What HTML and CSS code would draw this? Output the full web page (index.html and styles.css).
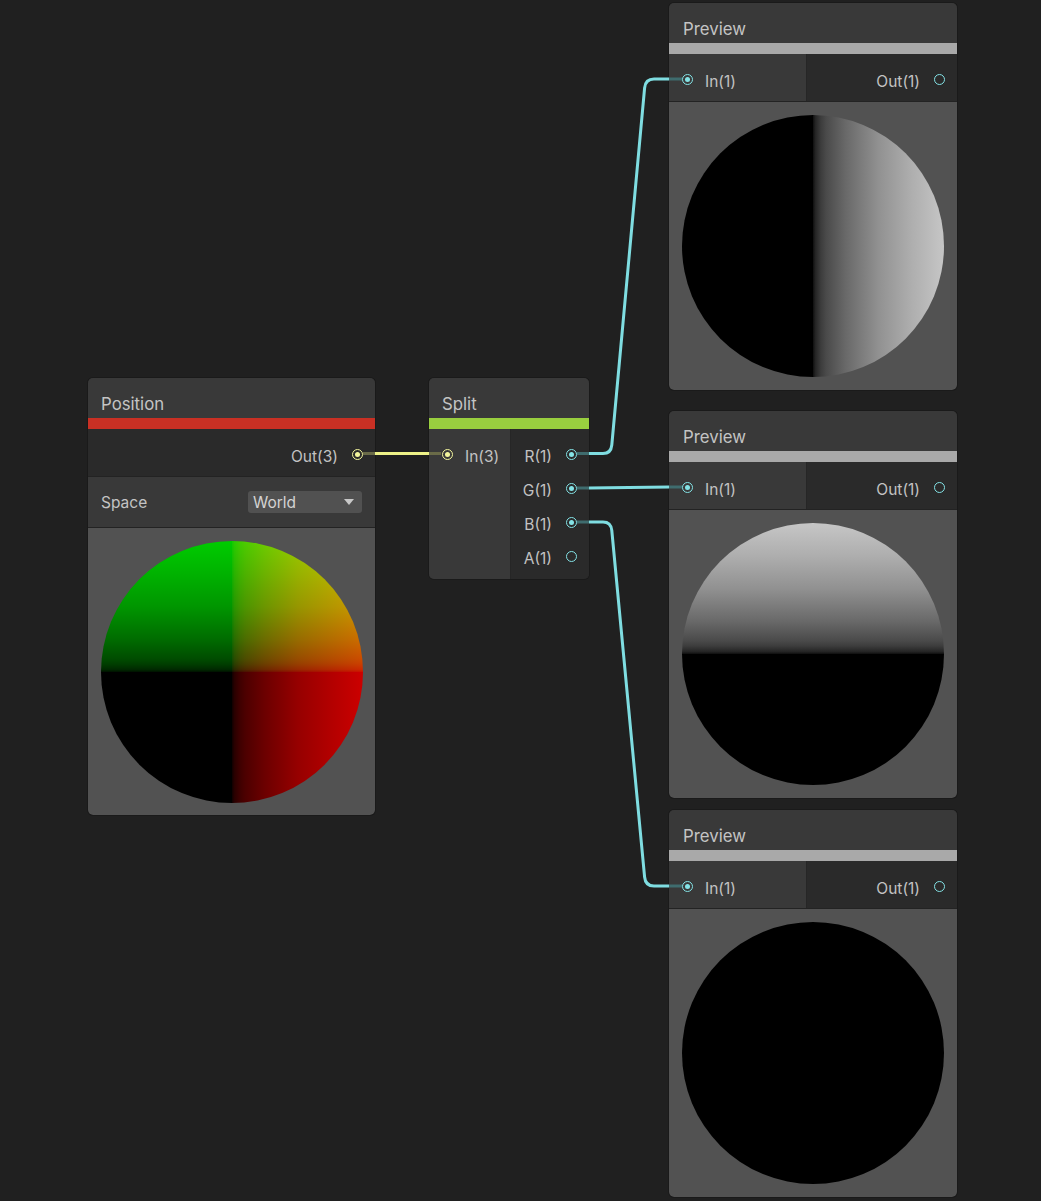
FILE: index.html
```html
<!DOCTYPE html>
<html>
<head>
<meta charset="utf-8">
<link rel="stylesheet" href="styles.css">
</head>
<body>
<div class="canvas">

  <div class="node node-position">
    <div class="title">Position</div>
    <div class="bar bar-red"></div>
    <div class="ports single">
      <div class="col col-out full">
        <div class="row out"><span class="label">Out(3)</span><span class="port yellow on"></span></div>
      </div>
    </div>
    <div class="sep"></div>
    <div class="field">
      <span class="field-label">Space</span>
      <div class="dropdown"><span>World</span><span class="arrow"></span></div>
    </div>
    <div class="sep"></div>
    <div class="preview p287"><div class="sphere sphere-pos"></div></div>
  </div>

  <div class="node node-split">
    <div class="title">Split</div>
    <div class="bar bar-green"></div>
    <div class="ports split-body">
      <div class="col col-in split-in">
        <div class="row in"><span class="port yellow on"></span><span class="label">In(3)</span></div>
      </div>
      <div class="col col-out split-out">
        <div class="row out"><span class="label">R(1)</span><span class="port cyan on"></span></div>
        <div class="row out"><span class="label">G(1)</span><span class="port cyan on"></span></div>
        <div class="row out"><span class="label">B(1)</span><span class="port cyan on"></span></div>
        <div class="row out"><span class="label">A(1)</span><span class="port cyan"></span></div>
      </div>
    </div>
  </div>

  <div class="node node-preview pv1">
    <div class="title">Preview</div>
    <div class="bar bar-gray"></div>
    <div class="ports pv-ports">
      <div class="col col-in pv-in"><div class="row in"><span class="port cyan on"></span><span class="label">In(1)</span></div></div>
      <div class="col col-out pv-out"><div class="row out"><span class="label">Out(1)</span><span class="port cyan"></span></div></div>
    </div>
    <div class="sep"></div>
    <div class="preview p288"><div class="sphere sphere-r"></div></div>
  </div>

  <div class="node node-preview pv2">
    <div class="title">Preview</div>
    <div class="bar bar-gray"></div>
    <div class="ports pv-ports">
      <div class="col col-in pv-in"><div class="row in"><span class="port cyan on"></span><span class="label">In(1)</span></div></div>
      <div class="col col-out pv-out"><div class="row out"><span class="label">Out(1)</span><span class="port cyan"></span></div></div>
    </div>
    <div class="sep"></div>
    <div class="preview p288"><div class="sphere sphere-g"></div></div>
  </div>

  <div class="node node-preview pv3">
    <div class="title">Preview</div>
    <div class="bar bar-gray"></div>
    <div class="ports pv-ports">
      <div class="col col-in pv-in"><div class="row in"><span class="port cyan on"></span><span class="label">In(1)</span></div></div>
      <div class="col col-out pv-out"><div class="row out"><span class="label">Out(1)</span><span class="port cyan"></span></div></div>
    </div>
    <div class="sep"></div>
    <div class="preview p288"><div class="sphere sphere-b"></div></div>
  </div>

  <svg class="edges" width="1041" height="1201" viewBox="0 0 1041 1201">
    <!-- Position Out -> Split In -->
    <path class="dim-y" d="M363 453.5 L375 453.5"/>
    <path class="edge-y" d="M375 453.5 L429 453.5"/>
    <path class="dim-y" d="M429 453.5 L441 453.5"/>
    <!-- R -> Preview 1 -->
    <path class="dim-c" d="M577 453.5 L589 453.5"/>
    <path class="edge-c" d="M589 453.5 L603 453.5 Q611 453.5 611.8 445 L644.6 88 Q645.4 79 654 79 L669 79"/>
    <path class="dim-c" d="M669 79 L682 79"/>
    <!-- G -> Preview 2 -->
    <path class="dim-c" d="M577 488 L589 488"/>
    <path class="edge-c" d="M589 488 L669 487"/>
    <path class="dim-c" d="M669 487 L682 487"/>
    <!-- B -> Preview 3 -->
    <path class="dim-c" d="M577 522 L589 522"/>
    <path class="edge-c" d="M589 522 L603 522 Q611 522 611.8 530.5 L644.6 877 Q645.4 886 654 886 L669 886"/>
    <path class="dim-c" d="M669 886 L682 886"/>
  </svg>

</div>
</body>
</html>
```

FILE: styles.css
```css
* { box-sizing: border-box; }

html, body {
  margin: 0;
  padding: 0;
  background: #202020;
}

body {
  font-family: Inter, "Noto Sans", "Liberation Sans", sans-serif;
  color: #c2c2c2;
}

.canvas {
  position: relative;
  width: 1041px;
  height: 1201px;
  overflow: hidden;
  background: #202020;
}

/* ---------- nodes ---------- */
.node {
  position: absolute;
  display: flex;
  flex-direction: column;
  background: #2a2a2a;
  border-radius: 5px;
  overflow: hidden;
  box-shadow: 0 0 0 1px #1a1a1a;
}

.node-position { left: 88px; top: 378px; width: 287px; }
.node-split    { left: 429px; top: 378px; width: 160px; }
.node-preview  { left: 669px; width: 288px; }
.pv1 { top: 3px; }
.pv2 { top: 411px; }
.pv3 { top: 810px; }

.title {
  height: 40px;
  padding: 16px 0 0 13px;
  font-size: 16.8px;
  line-height: 20px;
  background: #393939;
  color: #c4c4c4;
}
.node-preview .title { padding-left: 14px; }

.bar { height: 11px; }
.bar-red   { background: #c93024; }
.bar-green { background: #99cf3f; }
.bar-gray  { background: #a9a9a9; }

.sep { height: 1px; background: #232323; }

/* ---------- ports ---------- */
.ports {
  display: flex;
}
.col {
  display: flex;
  flex-direction: column;
  padding: 8px 0 5px;
}
.col-in  { background: #393939; }
.col-out { background: #2a2a2a; }
.full { flex: 1; }

.split-body { height: 150px; }
.split-in  { width: 82px; border-right: 1px solid #262626; }
.split-out { flex: 1; padding-bottom: 6px; }

.pv-in  { width: 138px; border-right: 1px solid #262626; }
.pv-out { flex: 1; }

.row {
  height: 34px;
  display: flex;
  align-items: center;
  font-size: 15.5px;
}
.row.out { justify-content: flex-end; padding-right: 12px; }
.row.in  { justify-content: flex-start; padding-left: 12px; }

.label {
  margin-top: 6px;
  color: #c2c2c2;
  line-height: 18px;
}
.row.out .label { margin-right: 14px; }
.row.in  .label { margin-left: 12px; }

.port {
  position: relative;
  width: 11px;
  height: 11px;
  border-radius: 50%;
  border: 1.6px solid;
  flex: none;
}
.row.in .port { margin-left: 1px; }
.port.yellow { border-color: #f3f59c; }
.port.cyan   { border-color: #84e3e6; }
.port.on::after {
  content: "";
  position: absolute;
  left: 50%;
  top: 50%;
  width: 5px;
  height: 5px;
  margin: -2.5px 0 0 -2.5px;
  border-radius: 50%;
}
.port.yellow.on::after { background: #f3f59c; }
.port.cyan.on::after   { background: #84e3e6; }

/* ---------- field ---------- */
.field {
  height: 50px;
  display: flex;
  align-items: center;
  justify-content: space-between;
  padding: 0 13px;
  background: #393939;
  font-size: 15.5px;
}
.field-label { color: #c4c4c4; }

.dropdown {
  width: 114px;
  height: 22px;
  background: #515151;
  border-radius: 3px;
  display: flex;
  align-items: center;
  justify-content: space-between;
  padding: 0 8px 0 5px;
  color: #d4d4d4;
  font-size: 15.5px;
}
.arrow {
  width: 0;
  height: 0;
  border-left: 5px solid transparent;
  border-right: 5px solid transparent;
  border-top: 6px solid #c8c8c8;
}

/* ---------- previews ---------- */
.preview {
  background: #525252;
  display: flex;
  align-items: center;
  justify-content: center;
  border-radius: 0 0 5px 5px;
}
.p287 { height: 287px; }
.p288 { height: 288px; }

.sphere {
  width: 262px;
  height: 262px;
  border-radius: 50%;
  background: #000;
}

.sphere-r {
  background: linear-gradient(to right,
    #000 0%, #000 50%, #141414 50.2%, #262626 51%, #3c3c3c 53%,
    #4a4a4a 55%, #696969 62.5%, #919191 75%, #aeaeae 87.5%, #c6c6c6 100%);
}

.sphere-g {
  background: linear-gradient(to top,
    #000 0%, #000 50%, #141414 50.2%, #262626 51%, #3c3c3c 53%,
    #4a4a4a 55%, #696969 62.5%, #919191 75%, #aeaeae 87.5%, #c6c6c6 100%);
}

.sphere-pos {
  background:
    linear-gradient(to right,
      #000 0%, #000 50%, #160000 50.2%, #2a0000 51%, #3e0000 53%,
      #4c0000 55%, #6c0000 62.5%, #960000 75%, #b20000 87.5%, #cc0000 100%),
    linear-gradient(to top,
      #000 0%, #000 50%, #001600 50.2%, #002a00 51%, #003e00 53%,
      #004c00 55%, #006c00 62.5%, #009600 75%, #00b200 87.5%, #00cc00 100%);
  background-blend-mode: screen;
}

/* ---------- edges ---------- */
.edges {
  position: absolute;
  left: 0;
  top: 0;
  pointer-events: none;
}
.edges path { fill: none; stroke-width: 3; stroke-linecap: butt; stroke-linejoin: round; }
.edge-y { stroke: #eef288; }
.dim-y  { stroke: #6a6b48; }
.edge-c { stroke: #7fdde1; }
.dim-c  { stroke: #3f6c6e; }
```
